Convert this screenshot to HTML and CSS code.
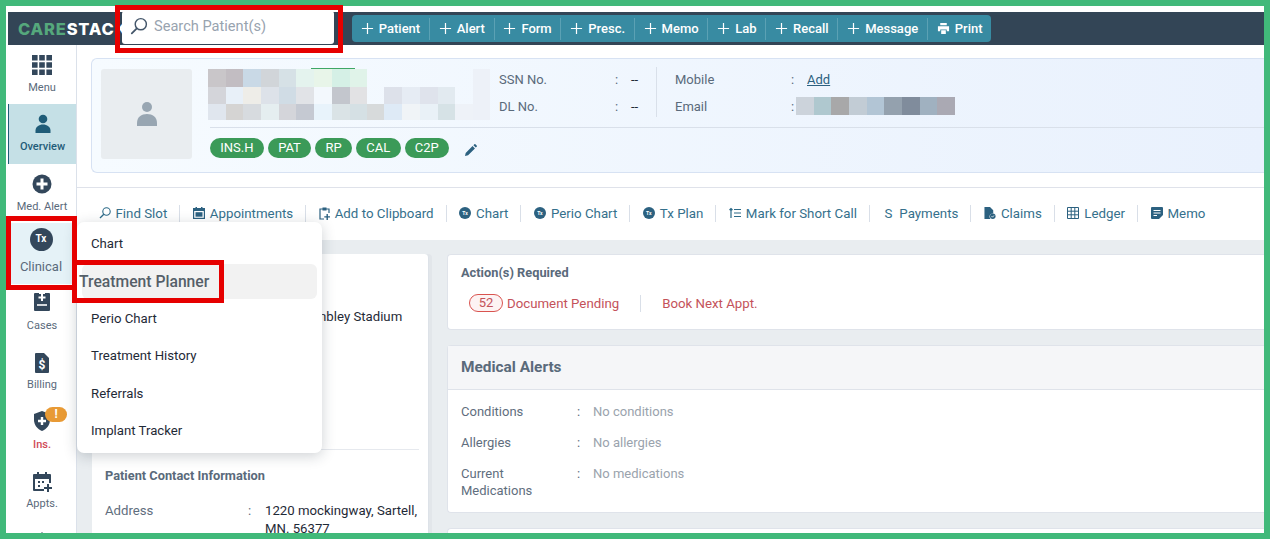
FILE: index.html
```html
<!DOCTYPE html>
<html lang="en">
<head>
<meta charset="utf-8">
<title>Patient Overview</title>
<link rel="stylesheet" href="styles.css">
</head>
<body>
<div class="app">
  <header class="topbar">
    <div class="logo"><span class="logo-g">CARE</span><span class="logo-w">STACK</span></div>
    <label class="search">
      <svg class="search-ic" viewBox="0 0 20 20"><circle cx="12" cy="8" r="6.2" fill="none" stroke="#44566a" stroke-width="1.6"/><path d="M7.6 12.6 2 18.2" stroke="#44566a" stroke-width="2" stroke-linecap="round"/></svg>
      <span>Search Patient(s)</span>
    </label>
    <nav class="quick">
      <a class="q"><svg viewBox="0 0 14 14"><path d="M7 1v12M1 7h12" stroke="#fff" stroke-width="1.3"/></svg>Patient</a>
      <a class="q"><svg viewBox="0 0 14 14"><path d="M7 1v12M1 7h12" stroke="#fff" stroke-width="1.3"/></svg>Alert</a>
      <a class="q"><svg viewBox="0 0 14 14"><path d="M7 1v12M1 7h12" stroke="#fff" stroke-width="1.3"/></svg>Form</a>
      <a class="q"><svg viewBox="0 0 14 14"><path d="M7 1v12M1 7h12" stroke="#fff" stroke-width="1.3"/></svg>Presc.</a>
      <a class="q"><svg viewBox="0 0 14 14"><path d="M7 1v12M1 7h12" stroke="#fff" stroke-width="1.3"/></svg>Memo</a>
      <a class="q"><svg viewBox="0 0 14 14"><path d="M7 1v12M1 7h12" stroke="#fff" stroke-width="1.3"/></svg>Lab</a>
      <a class="q"><svg viewBox="0 0 14 14"><path d="M7 1v12M1 7h12" stroke="#fff" stroke-width="1.3"/></svg>Recall</a>
      <a class="q"><svg viewBox="0 0 14 14"><path d="M7 1v12M1 7h12" stroke="#fff" stroke-width="1.3"/></svg>Message</a>
      <a class="q q-print"><svg viewBox="0 0 14 14"><path fill="#fff" d="M3.5 1h7v2.5h-7zM1 4.5h12V10h-2.5V8h-7v2H1zM4.5 9h5v4h-5z"/></svg>Print</a>
    </nav>
  </header>

  <div class="layout">
    <aside class="side">
      <div class="side-item item-first">
        <svg class="ic" viewBox="0 0 20 20"><path fill="#33475b" d="M0 0h5.6v5.6H0zM7.2 0h5.6v5.6H7.2zM14.400 0H20v5.600h-5.600zM0 7.200h5.600v5.600H0zM7.200 7.200h5.600v5.600H7.200zM14.400 7.200H20v5.600h-5.600zM0 14.400h5.600V20H0zM7.200 14.400h5.600V20H7.200zM14.400 14.400H20V20h-5.600z"/></svg>
        <span>Menu</span>
      </div>
      <div class="side-item is-active">
        <svg class="ic" viewBox="0 0 20 20"><circle cx="10" cy="5" r="4.300" fill="#1f5c78"/><path fill="#1f5c78" d="M2.500 19v-2.500C2.500 13 6 10.500 10 10.500s7.500 2.500 7.500 6V19z"/></svg>
        <span>Overview</span>
      </div>
      <div class="side-item item-med">
        <svg class="ic" viewBox="0 0 20 20"><circle cx="10" cy="10" r="9.500" fill="#33475b"/><path d="M10 4.500v11M4.500 10h11" stroke="#fff" stroke-width="3"/></svg>
        <span>Med. Alert</span>
      </div>
      <div class="side-item is-clinical">
        <span class="tx-big">Tx</span>
        <span>Clinical</span>
      </div>
      <div class="side-item">
        <svg class="ic ic-cases" viewBox="0 0 20 20"><path fill="#33475b" d="M3 1h4v1h6V1h4a1 1 0 0 1 1 1v16a1 1 0 0 1-1 1H3a1 1 0 0 1-1-1V2a1 1 0 0 1 1-1z"/><path d="M10 2v7M6.500 5.500h7" stroke="#fff" stroke-width="2"/><path d="M5 13h10" stroke="#fff" stroke-width="1.600"/></svg>
        <span>Cases</span>
      </div>
      <div class="side-item">
        <svg class="ic" viewBox="0 0 20 20"><path fill="#33475b" d="M4 0h8l5 5v14a1 1 0 0 1-1 1H4a1 1 0 0 1-1-1V1a1 1 0 0 1 1-1z"/><text x="10" y="16" font-family="Roboto" font-size="12" font-weight="700" fill="#fff" text-anchor="middle">$</text></svg>
        <span>Billing</span>
      </div>
      <div class="side-item is-warn">
        <div class="ins-wrap">
          <svg class="ic" viewBox="0 0 20 20"><path fill="#33475b" d="M10 0l8 3v6c0 5-3.500 9-8 11-4.500-2-8-6-8-11V3z"/><path d="M10 6v8M6 10h8" stroke="#fff" stroke-width="2.400"/></svg>
          <b class="bang">!</b>
        </div>
        <span>Ins.</span>
      </div>
      <div class="side-item">
        <svg class="ic" viewBox="0 0 20 20"><path fill="#33475b" d="M5 0h2v2h6V0h2v2h3a1 1 0 0 1 1 1v8h-2V7H3v10h9v2H2a1 1 0 0 1-1-1V3a1 1 0 0 1 1-1h3z"/><path fill="#33475b" d="M15 12h2v3h3v2h-3v3h-2v-3h-3v-2h3zM6 9h2v2H6zM10 9h2v2h-2zM6 13h2v2H6z"/></svg>
        <span>Appts.</span>
      </div>
      <div class="side-item">
        <svg class="ic" viewBox="0 0 20 20"><path fill="#33475b" d="M10 0l6 7H4z"/></svg>
      </div>
    </aside>

    <main class="main">
      <section class="patient">
        <div class="avatar">
          <svg viewBox="0 0 22 26" class="avatar-ic"><circle cx="11" cy="6" r="5" fill="#98a6b2"/><path fill="#98a6b2" d="M1 25v-3c0-6 4.500-9 10-9s10 3 10 9v3z"/></svg>
        </div>
        <div class="p-body">
          <div class="p-top">
            <div class="mosaic"></div>
            <dl class="kv kv-id">
              <div class="kv-row"><dt>SSN No.</dt><i>:</i><dd>--</dd></div>
              <div class="kv-row"><dt>DL No.</dt><i>:</i><dd>--</dd></div>
            </dl>
            <dl class="kv kv-contact">
              <div class="kv-row"><dt>Mobile</dt><i>:</i><dd><a class="add">Add</a></dd></div>
              <div class="kv-row"><dt>Email</dt><i class="tight">:</i><dd class="mail"></dd></div>
            </dl>
          </div>
          <div class="p-tags">
            <span class="tag">INS.H</span>
            <span class="tag">PAT</span>
            <span class="tag">RP</span>
            <span class="tag">CAL</span>
            <span class="tag">C2P</span>
            <svg class="pencil" viewBox="0 0 14 14"><path fill="#2c6180" d="M0 14l.8-3.600 8-8 2.800 2.800-8 8zM9.800 1.400 11 .2a.8.8 0 0 1 1.100 0l1.700 1.700a.8.8 0 0 1 0 1.100l-1.200 1.200z"/></svg>
          </div>
        </div>
      </section>

      <nav class="actions">
        <a class="act"><svg viewBox="0 0 12 12"><circle cx="7.500" cy="4.500" r="3.700" fill="none" stroke="#2c6a88" stroke-width="1.100"/><path d="M4.800 7.200 1 11" stroke="#2c6a88" stroke-width="1.300"/></svg>Find Slot</a>
        <a class="act"><svg viewBox="0 0 12 12"><path fill="#2c6180" d="M2.500 0h1.500v1h4V0h1.500v1H12v11H0V1h2.500z"/><path fill="#fff" d="M1.200 4h9.600v6.800H1.200z"/><path fill="#2c6180" d="M2.500 5.200h7v4.500h-7z"/></svg>Appointments</a>
        <a class="act"><svg class="narrow" viewBox="0 0 11 13"><path fill="none" stroke="#2c6180" stroke-width="1.200" d="M4 2H1v10h4M7 2h3v4"/><path fill="#2c6180" d="M3.500.5h4v3h-4zM7.500 7h1.400v2.200H11v1.300H8.900V13H7.500v-2.500H5.300V9.200h2.200z"/></svg>Add to Clipboard</a>
        <a class="act"><span class="tx">Tx</span>Chart</a>
        <a class="act"><span class="tx">Tx</span>Perio Chart</a>
        <a class="act"><span class="tx">Tx</span>Tx Plan</a>
        <a class="act"><svg viewBox="0 0 12 12"><path fill="none" stroke="#2c6a88" stroke-width="1.200" d="M2 11V1.500M.5 3 2 1.500 3.500 3M5 2.500h7M5 6h7M5 9.500h7"/></svg>Mark for Short Call</a>
        <a class="act"><span class="dollar">S</span>Payments</a>
        <a class="act"><svg viewBox="0 0 12 13"><path fill="#2c6180" d="M0 0h6l3.500 3.500V7a3.500 3.500 0 0 0-3 6H0z"/><circle cx="9" cy="10" r="3" fill="#2c6180"/><path d="M7.700 10l1 1 1.600-1.800" fill="none" stroke="#fff" stroke-width=".9"/></svg>Claims</a>
        <a class="act"><svg viewBox="0 0 12 12"><path fill="none" stroke="#2c6180" stroke-width="1" d="M.5.500h11v11H.5zM.5 4.200h11M.5 7.800h11M4.200.500v11M7.800.500v11"/></svg>Ledger</a>
        <a class="act"><svg viewBox="0 0 12 12"><path fill="#2c6180" d="M1 0h10a1 1 0 0 1 1 1v7l-4 4H1a1 1 0 0 1-1-1V1a1 1 0 0 1 1-1z"/><path stroke="#fff" stroke-width="1.200" d="M2.500 3.500h7M2.500 6h7M2.500 8.500h3.500"/></svg>Memo</a>
      </nav>

      <div class="content">
        <section class="left-card">
          <div class="info">
            <div class="row"><span class="row-k">Address</span><i>:</i><span class="row-v">Near Wembley Stadium</span></div>
          </div>
          <h3 class="h-small">Patient Contact Information</h3>
          <div class="row row-addr"><span class="row-k">Address</span><i>:</i><span class="row-v">1220 mockingway, Sartell, MN. 56377</span></div>
        </section>

        <div class="right-col">
          <section class="card card-act">
            <h3 class="h-small">Action(s) Required</h3>
            <div class="act-row">
              <span class="count">52</span>
              <span class="warn">Document Pending</span>
              <span class="vsep"></span>
              <span class="warn">Book Next Appt.</span>
            </div>
          </section>
          <section class="card card-med">
            <h2 class="h-big">Medical Alerts</h2>
            <div class="med-body">
              <div class="med-row"><span class="med-k">Conditions</span><i>:</i><span class="med-v">No conditions</span></div>
              <div class="med-row"><span class="med-k">Allergies</span><i>:</i><span class="med-v">No allergies</span></div>
              <div class="med-row"><span class="med-k">Current Medications</span><i>:</i><span class="med-v">No medications</span></div>
            </div>
          </section>
          <section class="card card-next"></section>
        </div>
      </div>
    </main>

    <div class="menu">
      <a class="menu-item">Chart</a>
      <a class="menu-item is-hover"><span>Treatment Planner</span></a>
      <a class="menu-item">Perio Chart</a>
      <a class="menu-item">Treatment History</a>
      <a class="menu-item">Referrals</a>
      <a class="menu-item">Implant Tracker</a>
    </div>
  </div>

  <div class="mark mark-search"></div>
  <div class="mark mark-clinical"></div>
  <div class="mark mark-planner"></div>
</div>
</body>
</html>
```
FILE: styles.css
```css
* { box-sizing: border-box; }
html, body { margin: 0; height: 539px; overflow: hidden; }
body {
  background: #41b97a;
  padding: 6px;
  font-family: Roboto, "Liberation Sans", sans-serif;
  font-size: 13px;
  color: #1f2a37;
}
a { cursor: pointer; }
i { font-style: normal; }
h2, h3, dl, dd { margin: 0; }

.app {
  height: 527px;
  background: #fff;
  display: flex;
  flex-direction: column;
  overflow: hidden;
}

/* top bar */
.topbar {
  flex: none;
  height: 33px;
  margin: 6px 0 0 2px;
  background: #334556;
  display: flex;
  align-items: flex-start;
}
.logo {
  width: 114px;
  padding: 7px 0 0 10px;
  font: 800 16.500px/20px Inter, Lato, sans-serif;
  letter-spacing: .8px;
  white-space: nowrap;
  overflow: hidden;
}
.logo-g { color: #55a87c; }
.logo-w { color: #fff; }
.search {
  width: 212px;
  height: 33px;
  margin-top: -1px;
  padding: 0 0 3px 8px;
  background: #fff;
  border-radius: 3px;
  display: flex;
  align-items: center;
  gap: 6px;
  color: #98a3af;
  font-size: 14.600px;
}
.search-ic { width: 18px; height: 18px; }
.quick {
  margin: 3px 0 0 18px;
  height: 27px;
  background: #388ba2;
  border-radius: 4px;
  display: flex;
  align-items: center;
}
.q {
  display: flex;
  align-items: center;
  gap: 5px;
  height: 22px;
  padding: 0 8.770px;
  color: #fff;
  font-size: 13px;
  font-weight: 500;
  border-right: 1px solid #5ba1b4;
}
.q svg { width: 13px; height: 13px; }
.q-print { border-right: 0; }

/* layout */
.layout { flex: 1; min-height: 0; display: flex; padding-left: 2px; position: relative; }
.side {
  flex: none;
  width: 69px;
  border-right: 1px solid #dbe1ea;
  background: #fff;
  overflow: hidden;
}
.side-item {
  height: 59.500px;
  padding-top: 9px;
  display: flex;
  flex-direction: column;
  align-items: center;
  color: #5a6a7b;
  font-size: 11px;
  line-height: 14px;
  white-space: nowrap;
}
.ic { width: 20px; height: 20px; margin: 1px 0; display: block; flex: none; }
.side-item > span:last-child { margin-top: 4px; }
.item-first { height: 59px; }
.item-first > span:last-child,
.is-active > span:last-child,
.item-med > span:last-child { margin-top: 5px; }
.is-active {
  height: 60px;
  background: #c5e0e6;
  border-left: 1px solid #1f5c78;
  color: #1f5c78;
  font-weight: 500;
}
.is-clinical {
  height: 61px;
  margin-top: -1px;
  padding: 5px 2px 0 0;
  background: #e5f2f7;
  font-size: 13px;
  color: #5a6a7b;
}
.side-item.is-clinical > span:last-child { margin-top: 9px; }
.tx-big {
  width: 23px;
  height: 23px;
  border-radius: 50%;
  background: #33475b;
  color: #fff;
  font-size: 10px;
  font-weight: 700;
  display: flex;
  align-items: center;
  justify-content: center;
}
.ic-cases { margin-top: -1px; margin-bottom: 3px; }
.is-warn { color: #cf4a55; font-weight: 500; }
.ins-wrap { position: relative; height: 22px; margin-top: -2px; margin-bottom: 2px; }
.bang {
  position: absolute;
  left: 13px;
  top: -3px;
  width: 22px;
  height: 15px;
  border-radius: 8px;
  background: #e89a35;
  color: #fff;
  font-size: 12px;
  line-height: 15px;
  text-align: center;
}

.main { flex: 1; min-width: 0; display: flex; flex-direction: column; }

/* patient card */
.patient {
  flex: none;
  height: 115px;
  margin: 13px 0 0 14px;
  padding: 10px 0 0 9px;
  display: flex;
  gap: 16px;
  background: linear-gradient(90deg, #f6fbff, #e9f1fd);
  border: 1px solid #d7e2f3;
  border-right: 0;
  border-radius: 6px 0 0 6px;
}
.avatar {
  flex: none;
  width: 91px;
  height: 90px;
  background: #e9edf0;
  border-radius: 3px;
  display: flex;
  align-items: center;
  justify-content: center;
}
.avatar-ic { width: 22px; height: 26px; }
.p-body { flex: 1; min-width: 0; margin-top: -2px; }
.p-top {
  height: 61px;
  display: flex;
  align-items: flex-start;
  border-bottom: 1px solid #d9e0ea;
  margin-left: 2px;
}
.mosaic {
  flex: none;
  position: relative;
  width: 282px;
  height: 51px;
  margin: 2px 0 0 -2px;
  background-repeat: no-repeat;
  background-size: 282px 18px, 282px 17px, 282px 16px;
  background-position: 0 0, 0 18px, 0 35px;
  background-image:
    linear-gradient(90deg, #c9c6c9 0 18px, #c2bdc2 0 35px, #c9d9e6 0 53px, #d1d5d9 0 71px, #d6e1e6 0 88px, #e4f3ee 0 106px, #e8f5e9 0 124px, #d5f0e6 0 142px, #e0f3e9 0 159px, transparent 0 265px, #edf1f8 0),
    linear-gradient(90deg, #d4d5da 0 18px, #e8f0f8 0 35px, #eeede8 0 53px, #dde2e9 0 71px, #d0dce5 0 88px, #e1e3e7 0 106px, #f3f8fd 0 124px, #c3c6cd 0 142px, #e2e2e4 0 159px, transparent 0 176px, #dde1ea 0 194px, #e6ecf4 0 212px, #dfe3ec 0 230px, #e2eaf0 0 247px, transparent 0 265px, #edf1f8 0),
    linear-gradient(90deg, #e0e6ee 0 18px, #d5d4d3 0 35px, #d7dbdf 0 53px, #e5eef0 0 71px, #d4d5da 0 88px, #c5c9d2 0 106px, #e8f3fb 0 124px, #dae3e6 0 142px, #d5e0e4 0 159px, #d7dadb 0 176px, #deeaf6 0 194px, #f0f4f7 0 212px, #e9f1f7 0 230px, #d6e2e6 0 247px, #eef2f8 0 265px, #edf1f8 0);
}
.mosaic::before {
  content: "";
  position: absolute;
  left: 103px;
  top: -1px;
  width: 44px;
  height: 1px;
  background: #3fa765;
}
.kv { flex: none; display: flex; flex-direction: column; gap: 12px; padding-top: 5px; color: #5a6a7b; }
.kv-id { width: 158px; margin-left: 9px; height: 50px; border-right: 1px solid #d9e0ea; }
.kv-contact { margin-left: 18px; }
.kv-row { display: flex; line-height: 15px; }
.kv-row dt { width: 116px; }
.kv-row i { width: 16px; }
.kv-id dd { color: #1f2a37; }
.kv-row .tight { width: 5px; }
.add { color: #2c6180; text-decoration: underline; }
.mail {
  width: 159px;
  height: 18px;
  margin-top: -2px;
  background: linear-gradient(90deg, #ccd3db 0 18px, #afc8cf 0 35px, #a8a8a9 0 53px, #c2ccd5 0 71px, #b2c5d5 0 88px, #94a1ae 0 106px, #808c9c 0 124px, #a0b1c0 0 141px, #aaa9b3 0);
}
.p-tags { display: flex; align-items: center; gap: 4px; padding: 10px 0 0 2px; }
.tag {
  height: 20px;
  padding: 0 10.300px;
  border-radius: 10px;
  background: #3b9a58;
  color: #fff;
  font-size: 13px;
  line-height: 20px;
}
.pencil { width: 12px; height: 12px; margin: 4px 0 0 12px; }

/* actions */
.actions {
  flex: none;
  height: 53px;
  margin-top: 14px;
  padding: 0 0 2px 9px;
  border-top: 1px solid #dfe2ea;
  display: flex;
  align-items: center;
}
.act {
  display: flex;
  align-items: center;
  gap: 5px;
  height: 17px;
  padding: 0 12px 0 12.500px;
  color: #35708c;
  font-size: 13.300px;
  white-space: nowrap;
  border-right: 1px solid #d9dfe8;
}
.act:last-child { border-right: 0; }
.act svg { width: 12px; height: 12px; flex: none; }
.act .narrow { width: 11px; height: 13px; }
.tx {
  width: 12px;
  height: 12px;
  border-radius: 50%;
  background: #2c6180;
  color: #fff;
  font-size: 5px;
  font-weight: 700;
  line-height: 12px;
  text-align: center;
}
.dollar { width: 12px; text-align: center; }

/* content */
.content {
  flex: 1;
  min-height: 0;
  background: #e9edf0;
  padding: 14px 0 0 15px;
  display: flex;
  gap: 18px;
  overflow: hidden;
}
.left-card {
  flex: none;
  width: 337px;
  height: 300px;
  background: #fff;
  border-right: 1px solid #dde2e8;
  box-shadow: 3px 0 0 #e2e6ea;
  border-radius: 4px 4px 0 0;
}
.info { height: 196px; margin: 0 9px 0 13px; padding-top: 54px; border-bottom: 1px solid #e6e9ee; }
.row { display: flex; line-height: 18px; color: #1f2a37; font-size: 13.200px; }
.row-k { width: 143px; color: #5f6e7e; flex: none; }
.row i { width: 17px; color: #5f6e7e; flex: none; }
.h-small { font-size: 12.800px; font-weight: 700; color: #5a6a7b; line-height: 16px; }
.left-card .h-small { margin: 18px 0 0 13px; }
.row-addr { margin: 18px 9px 0 13px; }
.right-col { flex: 1; min-width: 0; display: flex; flex-direction: column; gap: 15px; }
.card {
  flex: none;
  background: #fff;
  border: 1px solid #dfe3ea;
  border-right: 0;
  border-radius: 4px 0 0 4px;
}
.card-act { height: 76px; padding: 10px 0 0 13px; }
.act-row { display: flex; align-items: center; margin: 13px 0 0 8px; }
.count {
  width: 34px;
  height: 18px;
  border: 1px solid #d9534f;
  border-radius: 9px;
  background: #fdf3f3;
  color: #c4525a;
  text-align: center;
  line-height: 16px;
  margin-right: 4px;
}
.warn { color: #c4525a; font-size: 13.250px; }
.vsep { width: 1px; height: 17px; background: #d9dfe8; margin: 0 21px; }
.card-med { height: 168px; }
.h-big {
  height: 44px;
  padding-left: 13px;
  background: #f5f6f8;
  border-bottom: 1px solid #dfe3ea;
  font-size: 15.400px;
  font-weight: 700;
  line-height: 43px;
  color: #5a6a7b;
}
.med-body { padding: 13px 0 0 13px; display: flex; flex-direction: column; gap: 14px; }
.med-row { display: flex; line-height: 17px; color: #5f6e7e; }
.med-row i { width: 16px; flex: none; }
.med-row .med-k { width: 80px; margin-right: 36px; flex: none; }
.med-v { color: #9aa3ad; }
.card-next { height: 40px; }

/* dropdown */
.menu {
  position: absolute;
  left: 71px;
  top: 177px;
  width: 245px;
  height: 231px;
  padding: 3px 5px;
  background: #fff;
  border-radius: 7px;
  box-shadow: 0 3px 14px rgba(30, 45, 60, .22);
  z-index: 5;
}
.menu-item {
  display: block;
  height: 37.400px;
  line-height: 37.400px;
  padding-left: 9px;
  font-size: 13.200px;
  color: #1f2a37;
}
.is-hover {
  height: 35px;
  line-height: 35px;
  margin: 1.600px 0 .800px;
  background: #f2f2f2;
  border-radius: 6px;
  color: #555f69;
  font-size: 15.700px;
  font-weight: 500;
}
.is-hover span { margin-left: -12px; }

/* red annotation frames */
.mark { position: absolute; border: 5px solid #e60000; z-index: 9; pointer-events: none; }
.mark-search { left: 115px; top: 5px; width: 228px; height: 48px; }
.mark-clinical { left: 6px; top: 216px; width: 71px; height: 74px; }
.mark-planner { left: 72px; top: 260px; width: 152px; height: 43px; }
```
